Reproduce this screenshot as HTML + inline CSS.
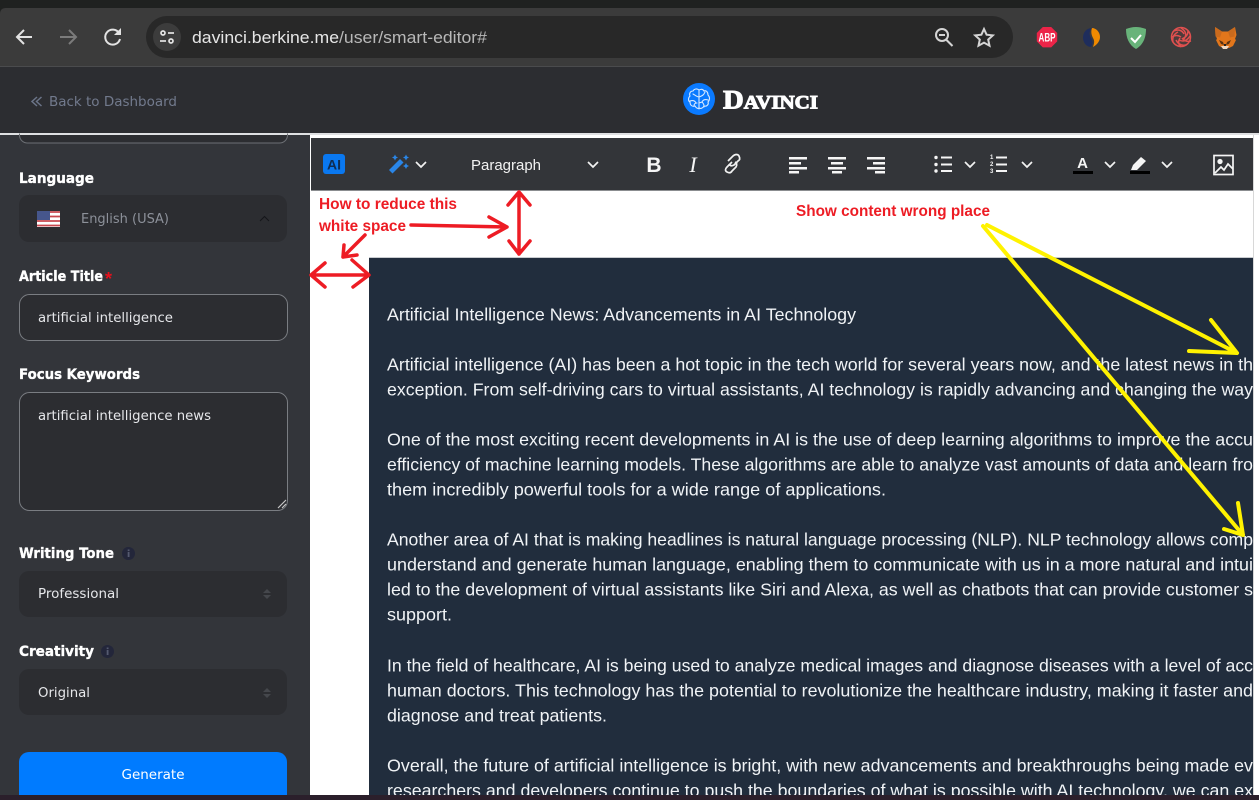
<!DOCTYPE html>
<html><head><meta charset="utf-8"><title>Davinci Smart Editor</title>
<style>
html,body{margin:0;padding:0;width:1259px;height:800px;overflow:hidden;background:#fff}
svg{display:block}
text{white-space:pre}
.ed{font:17.6px "Liberation Sans",sans-serif;fill:#f0f3f6}
.lab{font:bold 14px "DejaVu Sans",sans-serif;fill:#fff;stroke:#fff;stroke-width:.35px}
.val{font:13px "DejaVu Sans",sans-serif;fill:#e6e7ea}
.red{font:bold 15.5px "Liberation Sans",sans-serif;fill:#ed1c24}
</style></head><body>
<svg width="1259" height="800" viewBox="0 0 1259 800" xmlns="http://www.w3.org/2000/svg">
<defs><clipPath id="c"><rect x="369" y="258" width="884" height="537"/></clipPath></defs>
<rect width="1259" height="800" fill="#fff"/>
<!-- browser chrome -->
<rect width="1259" height="10" fill="#1f2120"/>
<rect x="0" y="8" width="1259" height="59" fill="#3b3b3b"/>
<path d="M0 8H6Q0 8 0 14Z" fill="#1f2120"/>
<rect x="146" y="16" width="867" height="42" rx="21" fill="#282828"/>
<circle cx="167" cy="37" r="14" fill="#3c3c3c"/>
<g fill="none" stroke="#e3e3e3" stroke-width="1.7">
<circle cx="163" cy="33" r="2"/><path d="M168 33h6"/><path d="M160 41h6"/><circle cx="171" cy="41" r="2"/>
</g>
<g fill="none" stroke="#e3e3e3" stroke-width="2">
<path d="M32 37H18M24 30l-7 7 7 7"/>
<path d="M60 37H75M69 30l7 7-7 7" stroke="#7b7b7b"/>
<path d="M119 33a7.5 7.5 0 1 0 1 6"/>
</g>
<path d="M121 28v7h-7z" fill="#e3e3e3"/>
<text x="192" y="43" font-family="Liberation Sans,sans-serif" font-size="17" fill="#e6e6e6" textLength="295" lengthAdjust="spacingAndGlyphs">davinci.berkine.me<tspan fill="#b8b8b8">/user/smart-editor#</tspan></text>
<g fill="none" stroke="#d4d4d4" stroke-width="2"><circle cx="942" cy="35" r="6"/><path d="M939 35h6"/><path d="M946.500 40l6 6"/>
<path d="M984 29l2.600 5.700 6.200.7-4.600 4.200 1.300 6.100-5.500-3.100-5.500 3.100 1.300-6.100-4.600-4.200 6.200-.7z"/></g>
<path d="M1042.800 27h8.400l6 6v8.400l-6 6h-8.400l-6-6V33z" fill="#ec2448"/>
<text x="1047" y="41.500" text-anchor="middle" font-family="Liberation Sans,sans-serif" font-weight="bold" font-size="11.500" fill="#fff" textLength="17" lengthAdjust="spacingAndGlyphs">ABP</text>
<path d="M1092 28c-6 0-9 5-9 9.500s3 9.500 8 9.500c2-3 2-6 0-9-2-3-2-7 1-10z" fill="#1e2d5c"/>
<path d="M1092 28c4 0 8 4 8 9 0 4-3 8-7 10 1-3 2-6 0-9-2-4-2-7-1-10z" fill="#f08a00"/>
<path d="M1136 27c4 0 7 1 10 2 0 9-3 16-10 20-7-4-10-11-10-20 3-1 6-2 10-2z" fill="#68b37a"/>
<path d="M1131 38l4 4 6-7" fill="none" stroke="#fff" stroke-width="2"/>
<circle cx="1181" cy="37" r="9.500" fill="#4d3b3b" stroke="#e0504f" stroke-width="1.500"/>
<g fill="none" stroke="#e0504f" stroke-width="1.500"><path d="M1181 28c5 3 6 7 3 11M1190 36c-3 5-7 6-11 4M1186 45c-5 1-8-1-10-5M1173 42c-1-5 1-8 5-10M1174 31c4-2 8-1 10 3M1188 31c0 4-2 6-6 8M1191 41c-4 1-7 0-9-3M1181 47c-3-3-3-6-1-9M1172 37c3-2 6-2 9 0"/></g>
<path d="M1215 27l7 4.500h6l7-4.500 1.500 8-1.500 4 1 1-3 6-4 2h-6l-4-2-3-6 1-1-1.500-4z" fill="#e2761b"/>
<path d="M1215 27l7 4.500-2 6-4.500-1zM1235 27l-7 4.500 2 6 4.500-1z" fill="#c96a1d"/>
<path d="M1219 40l4 2 1 3-3-1zM1231 40l-4 2-1 3 3-1z" fill="#5b3312"/>
<path d="M1221 46h8l-2 3h-4z" fill="#efd9c4"/><path d="M1224 44h2v2h-2z" fill="#222"/>
<rect y="66" width="1259" height="1" fill="#4a4b4d"/>
<!-- app header -->
<rect y="67" width="1259" height="67" fill="#2c2d31"/>
<rect y="133" width="1259" height="2" fill="#dfe0e2"/>
<path d="M37 97l-5 4.500 5 4.500M41.500 97l-5 4.500 5 4.500" fill="none" stroke="#6b7488" stroke-width="1.500"/>
<text x="49" y="106" font-family="DejaVu Sans,sans-serif" font-size="13.500" fill="#727a8d" textLength="128" lengthAdjust="spacingAndGlyphs">Back to Dashboard</text>
<circle cx="699" cy="99" r="16" fill="#0a7aff"/>
<g fill="none" stroke="#d8e9ff" stroke-width="1.100" stroke-linecap="round"><path d="M699 90c-2-2-5-1-6 1-3 0-4 3-3 5-2 2-2 5 0 6 0 3 2 5 5 4 1 2 3 3 4 2 2 1 4 0 5-2 3 1 5-2 4-4 2-2 2-5 0-7 0-3-2-5-4-4-1-2-3-2-5-1z"/><path d="M699 90v19M693 94c2 1 4 3 6 3M690 101c3-1 5 0 6 2M705 92c-1 3-3 4-6 5M708 100c-3-1-5 0-6 2l-3 1M694 106c0-2 1-3 3-3M704 107c0-2 0-3-2-5"/></g>
<text x="723" y="108.500" font-family="Liberation Serif,serif" font-weight="bold" fill="#fff" stroke="#fff" stroke-width="1" font-size="19" textLength="95" lengthAdjust="spacingAndGlyphs"><tspan font-size="26">D</tspan>AVINCI</text>
<!-- sidebar -->
<rect y="135" width="310" height="660" fill="#33353a"/>
<path d="M19.500 135v-1.500M287.500 135v-1.500" stroke="#6d7075"/>
<path d="M19.500 135c0 5 4 8 8 8h252c4 0 8-3 8-8" fill="#2c2d31" stroke="#6d7075"/>
<text class="lab" x="19" y="183" textLength="75" lengthAdjust="spacingAndGlyphs">Language</text>
<rect x="19" y="195" width="268" height="47" rx="10" fill="#2c2d31"/>
<g><rect x="37" y="211" width="23" height="16" fill="#fff"/><path d="M37 212h23M37 216.500h23M37 221h23M37 225.500h23" stroke="#c8484f" stroke-width="1.700"/><rect x="37" y="211" width="13" height="9" fill="#46568c"/></g>
<text x="81" y="223" font-family="DejaVu Sans,sans-serif" font-size="13" fill="#8d919a" textLength="88" lengthAdjust="spacingAndGlyphs">English (USA)</text>
<path d="M260 221l4.500-4.500 4.500 4.500" fill="none" stroke="#15161a" stroke-width="1"/>
<text class="lab" x="19" y="281" textLength="84" lengthAdjust="spacingAndGlyphs">Article Title</text>
<text x="105" y="285" font-family="Liberation Sans,sans-serif" font-weight="bold" font-size="18" fill="#e8101c">*</text>
<rect x="19.500" y="294.500" width="268" height="46" rx="10" fill="#2c2d31" stroke="#7a7d82"/>
<text class="val" x="38" y="322" textLength="135" lengthAdjust="spacingAndGlyphs">artificial intelligence</text>
<text class="lab" x="19" y="379" textLength="121" lengthAdjust="spacingAndGlyphs">Focus Keywords</text>
<rect x="19.500" y="392.500" width="268" height="118" rx="10" fill="#2c2d31" stroke="#7a7d82"/>
<text class="val" x="38" y="420" textLength="173" lengthAdjust="spacingAndGlyphs">artificial intelligence news</text>
<path d="M278 508l8-8M282 508l4-4" stroke="#c8c8c8" stroke-width="1.200"/>
<text class="lab" x="19" y="558" textLength="95" lengthAdjust="spacingAndGlyphs">Writing Tone</text>
<circle cx="128.500" cy="553.500" r="6.500" fill="#23263a"/><rect x="127.700" y="552" width="1.800" height="5" fill="#555a70"/><rect x="127.700" y="549.500" width="1.800" height="1.600" fill="#555a70"/>
<rect x="19" y="571" width="268" height="46" rx="10" fill="#2c2d31"/>
<text class="val" x="38" y="598" textLength="81" lengthAdjust="spacingAndGlyphs">Professional</text>
<path d="M263 593l4-4 4 4zM263 595l4 4 4-4z" fill="#45474c"/>
<text class="lab" x="19" y="656" textLength="75" lengthAdjust="spacingAndGlyphs">Creativity</text>
<circle cx="107.500" cy="651.500" r="6.500" fill="#23263a"/><rect x="106.700" y="650" width="1.800" height="5" fill="#555a70"/><rect x="106.700" y="647.500" width="1.800" height="1.600" fill="#555a70"/>
<rect x="19" y="669" width="268" height="46" rx="10" fill="#2c2d31"/>
<text class="val" x="38" y="697" textLength="52" lengthAdjust="spacingAndGlyphs">Original</text>
<path d="M263 692l4-4 4 4zM263 694l4 4 4-4z" fill="#45474c"/>
<rect x="19" y="752" width="268" height="60" rx="10" fill="#007bff"/>
<text x="153" y="779" text-anchor="middle" font-family="DejaVu Sans,sans-serif" font-size="13" fill="#fff" textLength="63" lengthAdjust="spacingAndGlyphs">Generate</text>
<!-- editor toolbar -->
<rect x="311" y="138" width="942" height="52" fill="#333539"/>
<rect x="311" y="190" width="942" height="1" fill="#8b8d90"/>
<rect x="1253" y="135" width="1" height="660" fill="#d8d8d8"/>
<rect x="323" y="154" width="22" height="20" rx="3" fill="#0a78f0"/>
<text x="334" y="169.500" text-anchor="middle" font-family="Liberation Sans,sans-serif" font-weight="bold" font-size="14" fill="#0f2c52">AI</text>
<path d="M389 170l11-11 3.500 3.500-11 11z" fill="#2a86e8"/><path d="M395 154.500l1 2 2 1-2 1-1 2-1-2-2-1 2-1zM406 154.500l1 2 2 1-2 1-1 2-1-2-2-1 2-1zM406 163l1 2 2 1-2 1-1 2-1-2-2-1 2-1z" fill="#2a86e8"/>
<g fill="none" stroke="#f2f2f2" stroke-width="1.700">
<path d="M416 162l5 5 5-5M588 162l5 5 5-5M965 162l5 5 5-5M1022 162l5 5 5-5M1105 162l5 5 5-5M1162 162l5 5 5-5"/>
</g>
<text x="471" y="170" font-family="Liberation Sans,sans-serif" font-size="15" fill="#f2f2f2" textLength="70" lengthAdjust="spacingAndGlyphs">Paragraph</text>
<text x="654" y="172" text-anchor="middle" font-family="Liberation Sans,sans-serif" font-weight="bold" font-size="21" fill="#f5f5f5">B</text>
<text x="693" y="172" text-anchor="middle" font-family="Liberation Serif,serif" font-style="italic" font-size="22" fill="#f5f5f5">I</text>
<g fill="none" stroke="#f2f2f2" stroke-width="1.700" transform="translate(-3 -2)"><path d="M731 163l5-5c2-2 5-2 6 0s1 4-1 5l-4 4c-2 1-4 1-5-1"/><path d="M735 164l-5 5c-2 2-2 4 0 5s4 1 5-1l4-4c1-2 1-4-1-5" /></g>
<g fill="#f5f5f5">
<rect x="789" y="157" width="18" height="2.500"/><rect x="789" y="162" width="12" height="2.500"/><rect x="789" y="167" width="18" height="2.500"/><rect x="789" y="171" width="10" height="2.500"/>
<rect x="828" y="157" width="18" height="2.500"/><rect x="831" y="162" width="12" height="2.500"/><rect x="828" y="167" width="18" height="2.500"/><rect x="832" y="171" width="10" height="2.500"/>
<rect x="867" y="157" width="18" height="2.500"/><rect x="873" y="162" width="12" height="2.500"/><rect x="867" y="167" width="18" height="2.500"/><rect x="875" y="171" width="10" height="2.500"/>
<circle cx="936" cy="157.500" r="1.700"/><circle cx="936" cy="164.500" r="1.700"/><circle cx="936" cy="171" r="1.700"/>
<rect x="941" y="156.500" width="11" height="2"/><rect x="941" y="163.500" width="11" height="2"/><rect x="941" y="170" width="11" height="2"/>
<rect x="996" y="156.500" width="11" height="2"/><rect x="996" y="163.500" width="11" height="2"/><rect x="996" y="170" width="11" height="2"/>
</g>
<g font-family="Liberation Sans,sans-serif" font-size="6" font-weight="bold" fill="#f5f5f5"><text x="990" y="159">1</text><text x="990" y="166">2</text><text x="990" y="173">3</text></g>
<text x="1082.500" y="168" text-anchor="middle" font-family="Liberation Sans,sans-serif" font-weight="bold" font-size="15" fill="#f5f5f5">A</text>
<rect x="1073" y="171" width="20" height="3" fill="#000"/>
<path d="M1131 170l2-5 8-8 5 4-9 9z" fill="#f5f5f5"/><rect x="1130" y="171" width="20" height="3" fill="#000"/>
<g fill="none" stroke="#f5f5f5" stroke-width="1.700"><rect x="1214" y="155.500" width="19" height="19"/><circle cx="1220" cy="161.500" r="1.800" fill="#f5f5f5"/><path d="M1215 173l6-6 3 3 4-6 5 5"/></g>
<!-- editor content -->
<rect x="369" y="258" width="884" height="537" fill="#212d3d"/>
<rect x="369" y="257" width="884" height="1" fill="#c9ccd0"/>
<g clip-path="url(#c)" class="ed" transform="translate(0 .5)">
<text class="ed" x="387" y="320" textLength="469" lengthAdjust="spacingAndGlyphs">Artificial Intelligence News: Advancements in AI Technology</text>
<text class="ed" x="387" y="370" textLength="866" lengthAdjust="spacingAndGlyphs">Artificial intelligence (AI) has been a hot topic in the tech world for several years now, and the latest news in th</text>
<text class="ed" x="387" y="395" textLength="866" lengthAdjust="spacingAndGlyphs">exception. From self-driving cars to virtual assistants, AI technology is rapidly advancing and changing the way</text>
<text class="ed" x="387" y="445" textLength="866" lengthAdjust="spacingAndGlyphs">One of the most exciting recent developments in AI is the use of deep learning algorithms to improve the accu</text>
<text class="ed" x="387" y="470" textLength="866" lengthAdjust="spacingAndGlyphs">efficiency of machine learning models. These algorithms are able to analyze vast amounts of data and learn fro</text>
<text class="ed" x="387" y="495" textLength="499" lengthAdjust="spacingAndGlyphs">them incredibly powerful tools for a wide range of applications.</text>
<text class="ed" x="387" y="545" textLength="866" lengthAdjust="spacingAndGlyphs">Another area of AI that is making headlines is natural language processing (NLP). NLP technology allows comp</text>
<text class="ed" x="387" y="570" textLength="866" lengthAdjust="spacingAndGlyphs">understand and generate human language, enabling them to communicate with us in a more natural and intui</text>
<text class="ed" x="387" y="595" textLength="866" lengthAdjust="spacingAndGlyphs">led to the development of virtual assistants like Siri and Alexa, as well as chatbots that can provide customer s</text>
<text class="ed" x="387" y="620" textLength="65" lengthAdjust="spacingAndGlyphs">support.</text>
<text class="ed" x="387" y="671" textLength="866" lengthAdjust="spacingAndGlyphs">In the field of healthcare, AI is being used to analyze medical images and diagnose diseases with a level of acc</text>
<text class="ed" x="387" y="696" textLength="866" lengthAdjust="spacingAndGlyphs">human doctors. This technology has the potential to revolutionize the healthcare industry, making it faster and</text>
<text class="ed" x="387" y="721" textLength="220" lengthAdjust="spacingAndGlyphs">diagnose and treat patients.</text>
<text class="ed" x="387" y="771" textLength="866" lengthAdjust="spacingAndGlyphs">Overall, the future of artificial intelligence is bright, with new advancements and breakthroughs being made ev</text>
<text class="ed" x="387" y="796" textLength="866" lengthAdjust="spacingAndGlyphs">researchers and developers continue to push the boundaries of what is possible with AI technology, we can ex</text>
</g>
<!-- bottom strip -->
<rect y="795" width="1259" height="5" fill="#2b1f2b"/>
<!-- annotations -->
<text class="red" x="319" y="209" textLength="138" lengthAdjust="spacingAndGlyphs">How to reduce this</text>
<text class="red" x="319" y="231" textLength="87" lengthAdjust="spacingAndGlyphs">white space</text>
<text class="red" x="796" y="216" textLength="194" lengthAdjust="spacingAndGlyphs">Show content wrong place</text>
<g fill="none" stroke="#ed1c24" stroke-width="3.500" stroke-linecap="round" stroke-linejoin="round">
<path d="M411 225l96 2M489 217l18 10-18 10"/>
<path d="M519 192v62M508 205l11-13 11 13M509 241l10 13 11-13"/>
<path d="M365 235l-22 22M344 245l-1 12 14-2"/>
<path d="M311 275h57M325 263l-14 12 14 12M352 260l17 15-16 12"/>
</g>
<g fill="none" stroke="#fff200" stroke-width="4" stroke-linecap="round" stroke-linejoin="round">
<path d="M987 225L1237 353M1211 320l26 33-48-2"/>
<path d="M983 226L1243 535M1238 503l5 32-19-6"/>
</g>
</svg>
</body></html>
